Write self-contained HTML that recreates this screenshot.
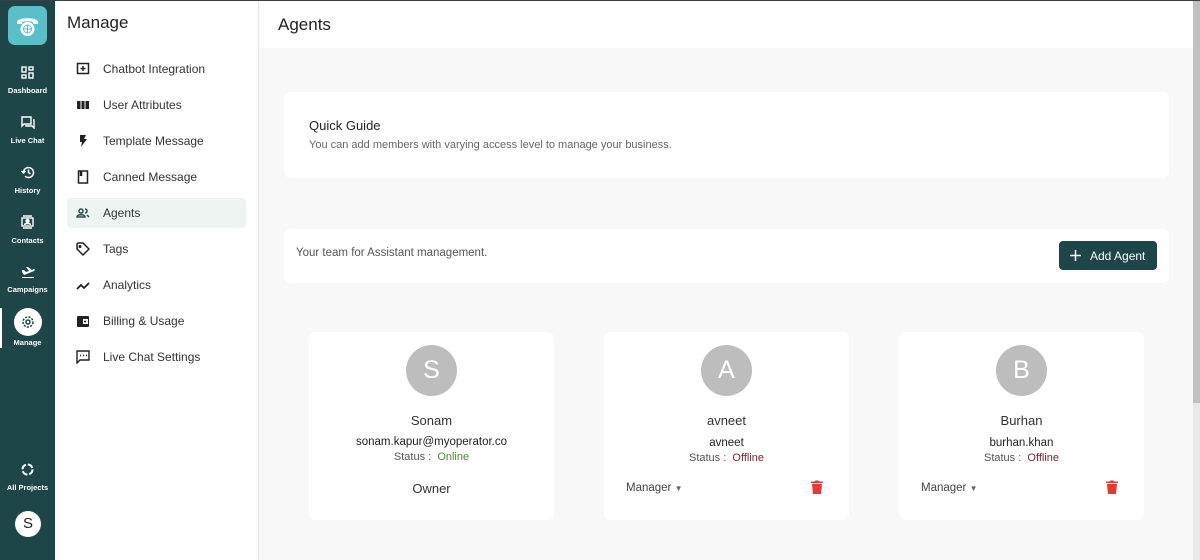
<!DOCTYPE html>
<html><head><meta charset="utf-8"><style>
*{box-sizing:border-box;margin:0;padding:0}
body{width:1200px;height:560px;overflow:hidden;font-family:"Liberation Sans",sans-serif;background:#f8f8f8;position:relative;color:#333}
.topline{position:absolute;left:0;top:0;width:1200px;height:1px;background:#3a3f4a;z-index:5}
.rail{position:absolute;left:0;top:0;width:55px;height:560px;background:#1e4547}
.logo{position:absolute;left:8px;top:6px;width:39px;height:39px;border-radius:7px;background:#5bbfc9}
.ri{position:absolute;left:0;width:55px;text-align:center;color:#fff;font-size:7.5px;font-weight:bold}
.ri svg{display:block;margin:0 auto 7px}
.menu{position:absolute;left:55px;top:0;width:204px;height:560px;background:#fff;border-right:1px solid #e8e8e8}
.menu h1{font-size:17px;font-weight:normal;color:#222;position:absolute;left:12px;top:13px}
.mi{position:absolute;left:12px;width:179px;height:30px;border-radius:4px;font-size:12px;color:#333}
.mi span{position:absolute;left:36px;top:8px}
.mi svg{position:absolute;left:9px;top:8px}
.mi.act{background:#edf4f2}
.hdr{position:absolute;left:260px;top:1px;width:933px;height:47px;background:#fff}
.hdr h2{font-size:17px;font-weight:normal;position:absolute;left:18px;top:14px;color:#222}
.card{position:absolute;background:#fff;border-radius:7px}
.ag{position:absolute;top:332px;width:245px;height:188px;background:#fff;border-radius:7px;text-align:center}
.av{width:51px;height:51px;border-radius:50%;background:#bdbdbd;color:#fff;font-size:25px;line-height:51px;margin:13px auto 0}
.nm{font-size:13px;color:#333;margin-top:17px}
.em{font-size:11.5px;color:#222;margin-top:8px}
.st{font-size:11px;color:#555;margin-top:3px}
.sb{position:absolute;left:1193px;top:0;width:7px;height:560px;background:#e8e8e8}
.sb div{width:7px;height:403px;background:#c1c1c1}
</style></head><body>
<div class="topline"></div>
<div class="rail">
 <div class="logo"><svg width="39" height="39" viewBox="0 0 39 39"><path d="M9 16c0-5 21-5 21 0v2h-5v-2c-3-1-8-1-11 0v2H9z" fill="#fff"/><circle cx="19.5" cy="23" r="7" fill="#fff"/><circle cx="19.5" cy="23" r="4" fill="none" stroke="#5bbfc9" stroke-width="1"/><path d="M15.5 23h8M19.5 19v8" stroke="#5bbfc9" stroke-width="1"/></svg></div>
 <div class="ri" style="top:66px"><svg width="13" height="13" viewBox="0 0 13 13" fill="none" stroke="#fff" stroke-width="1.4"><rect x="1" y="1" width="4" height="5"/><rect x="8" y="1" width="4" height="3"/><rect x="1" y="9" width="4" height="3"/><rect x="8" y="7" width="4" height="5"/></svg>Dashboard</div>
 <div class="ri" style="top:116px"><svg width="14" height="13" viewBox="0 0 14 13" fill="none" stroke="#fff" stroke-width="1.4"><path d="M1 1h9v7H3l-2 2z"/><path d="M12 4h1v8l-2-2H5V9"/></svg>Live Chat</div>
 <div class="ri" style="top:166px"><svg width="14" height="13" viewBox="0 0 14 13" fill="none" stroke="#fff" stroke-width="1.5"><path d="M2.5 6.5a5 5 0 1 1 1.5 3.6"/><path d="M0.5 5l2 2 2-2M7.5 3.5v3l2 1.5"/></svg>History</div>
 <div class="ri" style="top:215px"><svg width="13" height="14" viewBox="0 0 13 14" fill="none" stroke="#fff" stroke-width="1.4"><path d="M2 1h9M2 13h9"/><rect x="1" y="3" width="11" height="8"/><circle cx="6.5" cy="6" r="1.5" fill="#fff"/><path d="M3.5 10c0-2 6-2 6 0"/></svg>Contacts</div>
 <div class="ri" style="top:266px"><svg width="14" height="12" viewBox="0 0 14 12" fill="#fff"><path d="M1 11h12v1H1z"/><path d="M1 4l2 0 2 2 3-1-3-4 2 0 4 3 2-1c1 0 1 1 0 2L3 9 1 6z"/></svg>Campaigns</div>
 <div style="position:absolute;left:0;top:308px;width:2px;height:40px;background:#fff"></div>
 <div style="position:absolute;left:14px;top:308px;width:28px;height:28px;border-radius:50%;background:#fff"><svg style="position:absolute;left:7px;top:7px" width="14" height="14" viewBox="0 0 14 14" fill="none" stroke="#1e4547" stroke-width="1.5"><circle cx="7" cy="7" r="2"/><circle cx="7" cy="7" r="5" stroke-dasharray="2.2 1.2"/></svg></div>
 <div class="ri" style="top:338px">Manage</div>
 <div class="ri" style="top:463px"><svg width="13" height="13" viewBox="0 0 13 13" fill="none" stroke="#fff" stroke-width="2"><circle cx="6.5" cy="6.5" r="5" stroke-dasharray="6 1.9"/></svg>All Projects</div>
 <div style="position:absolute;left:15px;top:511px;width:26px;height:26px;border-radius:50%;background:#fff;color:#222;text-align:center;line-height:26px;font-size:15px">S</div>
</div>
<div class="menu">
 <h1>Manage</h1>
 <div class="mi" style="top:54px"><svg width="14" height="14" viewBox="0 0 14 14" fill="none" stroke="#222" stroke-width="1.5"><rect x="1.5" y="1.5" width="11" height="10"/><path d="M7 4v5M4.5 6.5h5"/></svg><span>Chatbot Integration</span></div>
 <div class="mi" style="top:90px"><svg width="14" height="14" viewBox="0 0 14 14" fill="#222"><rect x="1" y="3" width="12" height="8"/><path d="M5 3v8M9 3v8" stroke="#fff" stroke-width="1"/></svg><span>User Attributes</span></div>
 <div class="mi" style="top:126px"><svg width="14" height="14" viewBox="0 0 14 14" fill="#222"><path d="M4 1h6L8 5h3L5 13l1-5H4z"/></svg><span>Template Message</span></div>
 <div class="mi" style="top:162px"><svg width="14" height="14" viewBox="0 0 14 14" fill="none" stroke="#222" stroke-width="1.5"><rect x="2.5" y="1" width="9" height="12"/><path d="M5 1v5" stroke-width="2.5"/></svg><span>Canned Message</span></div>
 <div class="mi act" style="top:198px"><svg width="14" height="14" viewBox="0 0 14 14" fill="none" stroke="#2f4b4c" stroke-width="1.5"><circle cx="5" cy="5" r="2"/><path d="M1 11c0-3 8-3 8 0z"/><path d="M9 3a2 2 0 0 1 0 4M11 9l2 2"/></svg><span>Agents</span></div>
 <div class="mi" style="top:234px"><svg width="14" height="14" viewBox="0 0 14 14" fill="none" stroke="#222" stroke-width="1.5"><path d="M1 2v5l6 6 6-6-6-6H2z"/><circle cx="4" cy="4.5" r=".8" fill="#222"/></svg><span>Tags</span></div>
 <div class="mi" style="top:270px"><svg width="14" height="14" viewBox="0 0 14 14" fill="none" stroke="#222" stroke-width="1.8"><path d="M1 11l4-4 3 3 5-5"/></svg><span>Analytics</span></div>
 <div class="mi" style="top:306px"><svg width="14" height="14" viewBox="0 0 14 14" fill="#222"><rect x="1" y="2" width="12" height="11" rx="1"/><rect x="7" y="5" width="5" height="5" fill="#fff"/><circle cx="9" cy="7.5" r="1" fill="#222"/></svg><span>Billing &amp; Usage</span></div>
 <div class="mi" style="top:342px"><svg width="14" height="14" viewBox="0 0 14 14" fill="none" stroke="#222" stroke-width="1.4"><path d="M1 1h12v9H4l-3 3z"/><path d="M4 5.5h1M7 5.5h1M10 5.5h1" stroke-width="1.6"/></svg><span>Live Chat Settings</span></div>
</div>
<div class="hdr"><h2>Agents</h2></div>
<div class="card" style="left:284px;top:92px;width:885px;height:86px">
 <div style="position:absolute;left:25px;top:26px;font-size:13px;color:#222">Quick Guide</div>
 <div style="position:absolute;left:25px;top:47px;font-size:11px;color:#666">You can add members with varying access level to manage your business.</div>
</div>
<div class="card" style="left:284px;top:229px;width:885px;height:54px">
 <div style="position:absolute;left:12px;top:18px;font-size:11.5px;color:#555">Your team for Assistant management.</div>
 <div style="position:absolute;left:775px;top:12px;width:98px;height:29px;background:#1e4547;border-radius:4px;color:#fff;font-size:12px"><svg style="position:absolute;left:11px;top:9px" width="11" height="11" viewBox="0 0 11 11" stroke="#fff" stroke-width="1.5"><path d="M5.5 0v11M0 5.5h11"/></svg><span style="position:absolute;left:31px;top:8px">Add Agent</span></div>
</div>
<div class="ag" style="left:309px"><div class="av">S</div><div class="nm">Sonam</div><div class="em">sonam.kapur@myoperator.co</div><div class="st">Status :&nbsp; <span style="color:#4c8a3c">Online</span></div><div style="font-size:13px;margin-top:18px;color:#333">Owner</div></div>
<div class="ag" style="left:604px"><div class="av">A</div><div class="nm" style="margin-top:17px">avneet</div><div class="em" style="margin-top:9px">avneet</div><div class="st">Status :&nbsp; <span style="color:#7a1f2a">Offline</span></div>
 <div style="position:absolute;left:22px;top:150px;font-size:11.5px;color:#444">Manager <span style="font-size:8px;color:#666">▼</span></div>
 <svg style="position:absolute;left:207px;top:148px" width="12" height="14" viewBox="0 0 12 14" fill="#e53935"><path d="M0 1.5h3.5l1-1h3l1 1H12V3H0zM1 4h10l-1 10H2z"/></svg></div>
<div class="ag" style="left:899px"><div class="av">B</div><div class="nm" style="margin-top:17px">Burhan</div><div class="em" style="margin-top:9px">burhan.khan</div><div class="st">Status :&nbsp; <span style="color:#7a1f2a">Offline</span></div>
 <div style="position:absolute;left:22px;top:150px;font-size:11.5px;color:#444">Manager <span style="font-size:8px;color:#666">▼</span></div>
 <svg style="position:absolute;left:207px;top:148px" width="12" height="14" viewBox="0 0 12 14" fill="#e53935"><path d="M0 1.5h3.5l1-1h3l1 1H12V3H0zM1 4h10l-1 10H2z"/></svg></div>
<div class="sb"><div></div></div>
</body></html>
